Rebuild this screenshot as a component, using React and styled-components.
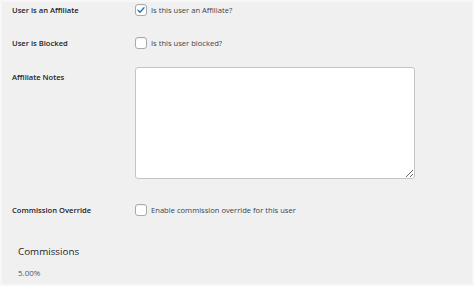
import React, { useState } from 'react';
import styled, { createGlobalStyle } from 'styled-components';

const GlobalStyle = createGlobalStyle`
  html, body {
    margin: 0;
    padding: 0;
    background: #f8f8f9;
  }
  * { box-sizing: border-box; }
`;

const Page = styled.div`
  height: 286px;
  border: 2px solid #f7f7f8;
  background: #f0f0f1;
  font-family: "Open Sans", "Noto Sans", sans-serif;
  color: #1d2327;
  overflow: hidden;
`;

const FormTable = styled.div`
  display: flex;
  flex-direction: column;
  padding: 2px 0 0 10px;
`;

const Row = styled.div`
  display: grid;
  grid-template-columns: 123px 1fr;
  align-items: ${p => (p.$top ? 'start' : 'center')};
  margin-top: ${p => p.$gap || 0}px;
`;

const Label = styled.div`
  font-size: 7.6px;
  font-weight: 600;
  line-height: 12px;
  padding-top: ${p => p.$offset || 0}px;
`;

const CheckLabel = styled.label`
  display: flex;
  align-items: center;
  gap: 4px;
  font-size: 7.6px;
  line-height: 12px;
  color: #3c434a;
  cursor: pointer;
`;

const Box = styled.span`
  width: 12px;
  height: 12px;
  border: 1px solid #a7aaad;
  border-radius: 3px;
  background: #fff;
  display: flex;
  align-items: center;
  justify-content: center;
  box-shadow: inset 0 1px 1px rgba(0, 0, 0, 0.05);
`;

const Notes = styled.textarea`
  width: 280px;
  height: 112px;
  border: 1px solid #c3c4c7;
  border-radius: 3px;
  background: #fff;
  margin: 0;
  display: block;
  font-family: inherit;
`;

const Section = styled.div`
  padding: 29px 0 0 16px;
`;

const Heading = styled.h2`
  margin: 0;
  font-size: 9.8px;
  font-weight: 400;
  line-height: 14px;
  color: #1d2327;
`;

const Value = styled.div`
  margin-top: 9px;
  font-size: 8px;
  line-height: 10px;
  color: #50575e;
`;

const Checkbox = ({ checked, onToggle, children }) => (
  <CheckLabel onClick={onToggle}>
    <Box>
      {checked && (
        <svg width="10" height="10" viewBox="0 0 20 20">
          <path d="M4 10.5l4 4 8-9" fill="none" stroke="#2271b1" strokeWidth="2.6" strokeLinecap="round" strokeLinejoin="round" />
        </svg>
      )}
    </Box>
    {children}
  </CheckLabel>
);

const App = () => {
  const [affiliate, setAffiliate] = useState(true);
  const [blocked, setBlocked] = useState(false);
  const [override, setOverride] = useState(false);

  return (
    <Page>
      <GlobalStyle />
      <FormTable>
        <Row>
          <Label>User is an Affiliate</Label>
          <Checkbox checked={affiliate} onToggle={() => setAffiliate(!affiliate)}>
            Is this user an Affiliate?
          </Checkbox>
        </Row>
        <Row $gap={21}>
          <Label>User is Blocked</Label>
          <Checkbox checked={blocked} onToggle={() => setBlocked(!blocked)}>
            Is this user blocked?
          </Checkbox>
        </Row>
        <Row $gap={18} $top>
          <Label $offset={4}>Affiliate Notes</Label>
          <Notes />
        </Row>
        <Row $gap={25}>
          <Label>Commission Override</Label>
          <Checkbox checked={override} onToggle={() => setOverride(!override)}>
            Enable commission override for this user
          </Checkbox>
        </Row>
      </FormTable>
      <Section>
        <Heading>Commissions</Heading>
        <Value>5.00%</Value>
      </Section>
    </Page>
  );
};

export default App;
